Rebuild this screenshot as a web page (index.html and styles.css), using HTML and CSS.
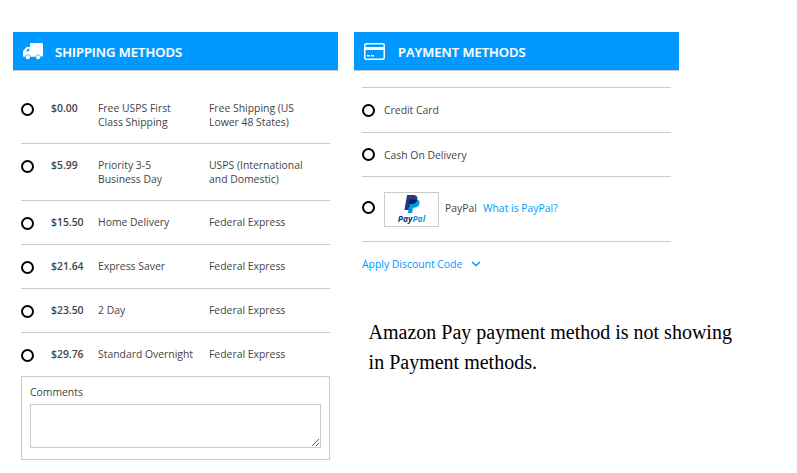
FILE: index.html
```html
<!DOCTYPE html>
<html lang="en">

<head>
    <meta charset="UTF-8">
    <title>Checkout</title>
    <link rel="stylesheet" href="styles.css">
</head>

<body>
    <div class="checkout">
        <section class="panel">
            <h2 class="panel-title">
                <svg class="panel-icon truck" width="20" height="17" viewBox="0 0 20 17">
                    <path fill="#fff" d="M7 1.2C7 .5 7.5 0 8.2 0h10.6c.7 0 1.2.5 1.2 1.2v11.3c0 .7-.5 1.2-1.2 1.2h-.9a2.9 2.9 0 0 0-5.6 0H7.600a2.900 2.900 0 0 0-5.600 0H.8c-.5 0-.8-.3-.8-.8V8.600c0-.4.1-.7.4-1L3.300 4.400c.3-.3.600-.4 1-.4H7z"/>
                    <path fill="#09f" d="M3 8.200 4.800 5.800H6.200V8.200z"/>
                    <circle cx="4.800" cy="14.200" r="2.100" fill="#fff"/>
                    <circle cx="15.100" cy="14.200" r="2.100" fill="#fff"/>
                </svg>
                SHIPPING METHODS
            </h2>
            <div class="shipping-list">
                <div class="ship-row">
                    <input class="radio" type="radio" name="ship">
                    <b>$0.00</b>
                    <span>Free USPS First Class Shipping</span>
                    <span>Free Shipping (US Lower 48 States)</span>
                </div>
                <div class="ship-row">
                    <input class="radio" type="radio" name="ship">
                    <b>$5.99</b>
                    <span>Priority 3-5 Business Day</span>
                    <span>USPS (International and Domestic)</span>
                </div>
                <div class="ship-row">
                    <input class="radio" type="radio" name="ship">
                    <b>$15.50</b>
                    <span>Home Delivery</span>
                    <span>Federal Express</span>
                </div>
                <div class="ship-row">
                    <input class="radio" type="radio" name="ship">
                    <b>$21.64</b>
                    <span>Express Saver</span>
                    <span>Federal Express</span>
                </div>
                <div class="ship-row">
                    <input class="radio" type="radio" name="ship">
                    <b>$23.50</b>
                    <span>2 Day</span>
                    <span>Federal Express</span>
                </div>
                <div class="ship-row">
                    <input class="radio" type="radio" name="ship">
                    <b>$29.76</b>
                    <span>Standard Overnight</span>
                    <span>Federal Express</span>
                </div>
            </div>
            <div class="comments">
                <label for="comments">Comments</label>
                <textarea id="comments"></textarea>
            </div>
        </section>

        <section class="panel">
            <h2 class="panel-title">
                <svg class="panel-icon card" width="21" height="17" viewBox="0 0 21 17">
                    <rect x=".75" y=".75" width="19.500" height="15.500" rx="1.500" fill="none" stroke="#fff" stroke-width="1.500"/>
                    <rect x="1" y="4" width="19" height="3" fill="#fff"/>
                    <rect x="3" y="12" width="3" height="1.500" fill="#fff"/>
                    <rect x="7" y="12" width="3" height="1.500" fill="#fff"/>
                </svg>
                PAYMENT METHODS
            </h2>
            <div class="payment-list">
                <div class="pay-row">
                    <input class="radio" type="radio" name="pay">
                    <span>Credit Card</span>
                </div>
                <div class="pay-row">
                    <input class="radio" type="radio" name="pay">
                    <span>Cash On Delivery</span>
                </div>
                <div class="pay-row paypal-row">
                    <input class="radio" type="radio" name="pay">
                    <div class="paypal-logo">
                        <svg width="18" height="19" viewBox="0 0 20 21">
                            <path fill="#009cde" d="M7.500 5h7c2.800 0 4.500 1.600 3.900 4.400-.6 3-2.700 4.600-5.700 4.600h-1.600l-1 6H5.500z"/>
                            <path fill="#253b80" d="M4.500 0h6.800c3.400 0 5.200 1.700 4.600 4.800-.6 3.400-3 5.200-6.300 5.200H7.300l-1.200 6.500H1.500z"/>
                            <path fill="#012169" d="M7 5h5.500c1 0 2 .2 2.900.7-.7 2.800-3 4.300-5.800 4.300H7.300L6.100 16.500l.9-11.500z"/>
                        </svg>
                        <span class="paypal-word">Pay<em>Pal</em></span>
                    </div>
                    <span class="paypal-name">PayPal</span>
                    <a class="link" href="#">What is PayPal?</a>
                </div>
            </div>
            <a class="link discount" href="#">
                Apply Discount Code
                <svg width="10" height="6" viewBox="0 0 10 6">
                    <path d="M1 1l4 3.500L9 1" fill="none" stroke="#09f" stroke-width="1.600"/>
                </svg>
            </a>
            <p class="note">Amazon Pay payment method is not showing in Payment methods.</p>
        </section>
    </div>
</body>

</html>
```

FILE: styles.css
```css
:root {
    --blue: #0099ff;
    --line: #ccc;
    --text: #444;
}

body {
    margin: 0;
    background: #fff;
    font-family: "Open Sans", Arial, sans-serif;
    font-size: 10.4px;
    line-height: 14px;
    color: var(--text);
}

.checkout {
    display: flex;
    gap: 16px;
    padding: 32px 0 0 13px;
}

.panel {
    width: 325px;
}

.panel-title {
    display: flex;
    align-items: center;
    box-sizing: border-box;
    height: 39px;
    margin: 0;
    padding-top: 1px;
    background: var(--blue);
    border-bottom: 1px solid var(--line);
    color: #fff;
    font-size: 13px;
    font-weight: 600;
    -webkit-text-stroke: 0.2px #fff;
}

.panel-icon {
    flex: none;
}

.truck {
    margin: -1px 12px 0 10px;
}

.card {
    margin: -1px 13px 0 10px;
}

.radio {
    appearance: none;
    width: 13px;
    height: 13px;
    margin: 2px 0 0;
    border: 2.5px solid #000;
    border-radius: 50%;
    background: #fff;
}

/* shipping */
.shipping-list {
    margin: 16px 8px 0;
}

.ship-row {
    display: grid;
    grid-template-columns: 30px 47px 111px 1fr;
    padding: 14px 0;
    border-top: 1px solid var(--line);
}

.ship-row:first-child {
    border-top: 0;
}

.ship-row b {
    font-weight: 600;
}

.ship-row span {
    padding-right: 14px;
}

.comments {
    margin: 0 8px;
    padding: 8px;
    height: 66px;
    border: 1px solid var(--line);
}

.comments label {
    display: block;
    margin-bottom: 5px;
}

.comments textarea {
    display: block;
    box-sizing: border-box;
    width: 291px;
    height: 44px;
    border: 1px solid var(--line);
    border-radius: 0;
    background: #fff;
}

/* payment */
.payment-list {
    margin: 16px 8px 0;
    border-top: 1px solid var(--line);
}

.pay-row {
    display: flex;
    align-items: center;
    height: 43.5px;
    border-bottom: 1px solid var(--line);
}

.pay-row .radio {
    margin: 1px 9px 0 0;
}

.pay-row > span {
    margin-top: 1px;
}

.paypal-row {
    height: 64px;
}

.paypal-row .radio {
    margin: 0 9px 3px 0;
}

.paypal-logo {
    box-sizing: border-box;
    display: flex;
    flex-direction: column;
    align-items: center;
    width: 55px;
    height: 35px;
    padding-top: 2px;
    border: 1px solid var(--line);
}

.paypal-word {
    font-size: 8.5px;
    line-height: 9px;
    font-weight: 700;
    font-style: italic;
    color: #12307f;
}

.paypal-word em {
    color: #179bd7;
}

.pay-row > .paypal-name {
    margin: 0 6px 2px;
}

.link {
    color: var(--blue);
    text-decoration: none;
}

.paypal-row .link {
    margin-bottom: 2px;
}

.discount {
    display: flex;
    align-items: center;
    gap: 9px;
    margin: 15px 0 0 8px;
}

.note {
    width: 375px;
    margin: 46px 0 0 14.6px;
    font-family: "Liberation Serif", "Times New Roman", serif;
    font-size: 20px;
    line-height: 30px;
    color: #000;
}
```
